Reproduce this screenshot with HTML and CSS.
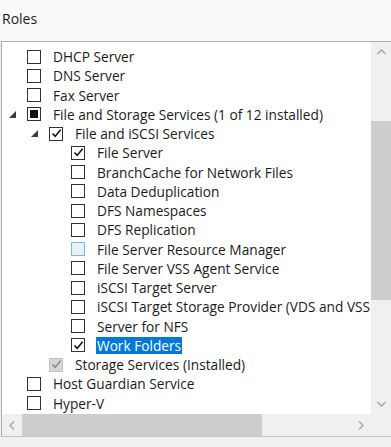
FILE: index.html
```html
<!DOCTYPE html>
<html lang="en">
<head>
    <meta charset="UTF-8">
    <title>Roles</title>
    <link rel="stylesheet" href="styles.css">
</head>
<body>
    <div class="page">
        <header class="title">Roles</header>

        <div class="listbox">
            <div class="tree">
                <div class="row lvl1"><span class="exp"></span><span class="cb"></span><span class="label">DHCP Server</span></div>
                <div class="row lvl1"><span class="exp"></span><span class="cb"></span><span class="label">DNS Server</span></div>
                <div class="row lvl1"><span class="exp"></span><span class="cb"></span><span class="label">Fax Server</span></div>
                <div class="row lvl1">
                    <span class="exp open"><svg width="7" height="7" viewBox="0 0 7 7"><polygon points="7,0 7,7 0,7" /></svg></span>
                    <span class="cb partial"><i></i></span>
                    <span class="label">File and Storage Services (1 of 12 installed)</span>
                </div>
                <div class="row lvl2">
                    <span class="exp open"><svg width="7" height="7" viewBox="0 0 7 7"><polygon points="7,0 7,7 0,7" /></svg></span>
                    <span class="cb checked"><svg width="11" height="11" viewBox="0 0 11 11"><polyline points="1.5,5.5 4.2,8.4 9.6,1.8" /></svg></span>
                    <span class="label">File and iSCSI Services</span>
                </div>
                <div class="row lvl3"><span class="exp"></span><span class="cb checked"><svg width="11" height="11" viewBox="0 0 11 11"><polyline points="1.5,5.5 4.2,8.4 9.6,1.8" /></svg></span><span class="label">File Server</span></div>
                <div class="row lvl3"><span class="exp"></span><span class="cb"></span><span class="label">BranchCache for Network Files</span></div>
                <div class="row lvl3"><span class="exp"></span><span class="cb"></span><span class="label">Data Deduplication</span></div>
                <div class="row lvl3"><span class="exp"></span><span class="cb"></span><span class="label">DFS Namespaces</span></div>
                <div class="row lvl3"><span class="exp"></span><span class="cb"></span><span class="label">DFS Replication</span></div>
                <div class="row lvl3"><span class="exp"></span><span class="cb hover"></span><span class="label">File Server Resource Manager</span></div>
                <div class="row lvl3"><span class="exp"></span><span class="cb"></span><span class="label">File Server VSS Agent Service</span></div>
                <div class="row lvl3"><span class="exp"></span><span class="cb"></span><span class="label">iSCSI Target Server</span></div>
                <div class="row lvl3"><span class="exp"></span><span class="cb"></span><span class="label">iSCSI Target Storage Provider (VDS and VSS hardware providers)</span></div>
                <div class="row lvl3"><span class="exp"></span><span class="cb"></span><span class="label">Server for NFS</span></div>
                <div class="row lvl3"><span class="exp"></span><span class="cb checked"><svg width="11" height="11" viewBox="0 0 11 11"><polyline points="1.5,5.5 4.2,8.4 9.6,1.8" /></svg></span><span class="label selected">Work Folders</span></div>
                <div class="row lvl2"><span class="exp"></span><span class="cb disabled"><svg width="11" height="11" viewBox="0 0 11 11"><polyline points="1.5,5.5 4.2,8.4 9.6,1.8" /></svg></span><span class="label">Storage Services (Installed)</span></div>
                <div class="row lvl1"><span class="exp"></span><span class="cb"></span><span class="label">Host Guardian Service</span></div>
                <div class="row lvl1"><span class="exp"></span><span class="cb"></span><span class="label">Hyper-V</span></div>
            </div>

            <!-- vertical scrollbar -->
            <div class="vscroll">
                <div class="arrow"><svg width="9" height="6" viewBox="0 0 9 6"><polyline points="0.5,5 4.5,1 8.5,5" /></svg></div>
                <div class="vtrack"><div class="vthumb"></div></div>
                <div class="arrow"><svg width="9" height="6" viewBox="0 0 9 6"><polyline points="0.5,1 4.5,5 8.5,1" /></svg></div>
            </div>

            <!-- horizontal scrollbar -->
            <div class="hscroll">
                <div class="arrow"><svg width="6" height="9" viewBox="0 0 6 9"><polyline points="5,0.5 1,4.5 5,8.5" /></svg></div>
                <div class="htrack"><div class="hthumb"></div></div>
                <div class="arrow"><svg width="6" height="9" viewBox="0 0 6 9"><polyline points="1,0.5 5,4.5 1,8.5" /></svg></div>
            </div>
            <div class="corner"></div>
        </div>
    </div>
</body>
</html>
```

FILE: styles.css
```css
* {
    box-sizing: border-box;
    margin: 0;
    padding: 0;
}

body {
    font-family: 'Open Sans', 'Noto Sans', sans-serif;
    font-size: 13.7px;
    color: #1b1b1b;
    background-color: #f0f0f0;
}

.page {
    width: 391px;
    height: 447px;
    overflow: hidden;
}

.title {
    height: 41px;
    padding: 9px 0 0 2px;
    background-color: #fafafa;
    font-size: 14px;
}

/* list box with the role tree */
.listbox {
    display: grid;
    grid-template-columns: 1fr 20px;
    grid-template-rows: 372px 22px;
    margin-left: 1px;
    border-top: 1px solid #adadad;
    border-left: 1px solid #adadad;
    border-bottom: 1px solid #c4c4c4;
    background-color: #fff;
}

.tree {
    overflow: hidden;
    padding-top: 5px;
}

.row {
    display: flex;
    align-items: center;
    height: 19.25px;
    white-space: nowrap;
}

.lvl2 { padding-left: 22px; }
.lvl3 { padding-left: 44px; }

.exp {
    flex: none;
    width: 25px;
    display: flex;
    align-items: center;
    padding-left: 7px;
}

.exp svg {
    fill: #3c3c3c;
}

.cb {
    flex: none;
    width: 14px;
    height: 14px;
    border: 1px solid #333;
    background-color: #fff;
    margin-right: 11px;
    display: flex;
    align-items: center;
    justify-content: center;
}

.cb svg {
    fill: none;
    stroke: #111;
    stroke-width: 1.6;
}

.cb.partial i {
    display: block;
    width: 8px;
    height: 8px;
    background-color: #111;
}

.cb.hover {
    border-color: #7eb4ea;
    background-color: #e5f1fb;
}

.cb.disabled {
    border-color: #c4c4c4;
    background-color: #d6d6d6;
}

.cb.disabled svg {
    stroke: #8a8a8a;
}

.label {
    line-height: 17px;
    padding: 0 1px;
}

.label.selected {
    background-color: #0078d7;
    color: #fff;
}

/* scrollbars */
.vscroll {
    display: flex;
    flex-direction: column;
    background-color: #f0f0f0;
}

.vtrack {
    flex: 1;
    padding-top: 59px;
}

.vthumb {
    height: 179px;
    background-color: #cdcdcd;
}

.hscroll {
    display: flex;
    background-color: #f0f0f0;
}

.htrack {
    flex: 1;
}

.hthumb {
    width: 240px;
    height: 100%;
    background-color: #cdcdcd;
}

.arrow {
    flex: none;
    width: 20px;
    height: 20px;
    display: flex;
    align-items: center;
    justify-content: center;
}

.hscroll .arrow {
    width: 20px;
    height: auto;
}

.arrow svg {
    fill: none;
    stroke: #a3a3a3;
    stroke-width: 1.3;
}

.corner {
    background-color: #f0f0f0;
}
```
